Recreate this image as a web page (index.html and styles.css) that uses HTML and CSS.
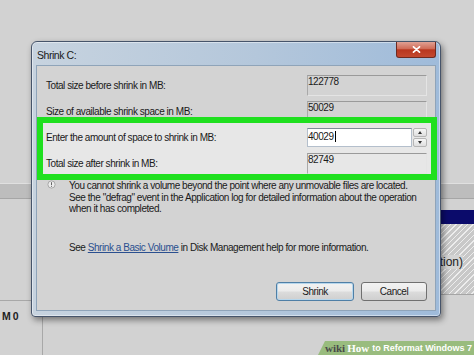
FILE: index.html
```html
<!DOCTYPE html>
<html>
<head>
<meta charset="utf-8">
<title>Shrink C:</title>
<link rel="stylesheet" href="styles.css">
</head>
<body>
<div class="desk">
  <div class="backdrop">
    <div class="band"></div>
    <div class="disk-row">
      <div class="disk-label"></div>
      <div class="partition">
        <div class="part-head"></div>
        <div class="part-body"><span class="part-text">(Primary Partition)</span></div>
      </div>
    </div>
    <div class="cd-row">
      <div class="cd-label">M 0</div>
      <div class="cd-part"></div>
    </div>
  </div>

  <div class="dialog">
    <div class="titlebar">
      <span class="title">Shrink C:</span>
      <span class="close">
        <svg width="9" height="7" viewBox="0 0 9 7"><path d="M1.5 0.8 L7.5 6.2 M7.5 0.8 L1.5 6.2" stroke="#fff" stroke-width="1.7" stroke-linecap="round"/></svg>
      </span>
    </div>
    <div class="client">
      <div class="row"><span>Total size before shrink in MB:</span><span class="field">122778</span></div>
      <div class="row"><span>Size of available shrink space in MB:</span><span class="field">50029</span></div>
      <div class="highlight">
        <div class="row row-in"><span>Enter the amount of space to shrink in MB:</span>
          <span class="spin"><span class="input">40029<span class="caret"></span></span><span class="spin-btns"><span class="sb"><span class="arrow up"></span></span><span class="sb"><span class="arrow down"></span></span></span></span>
        </div>
        <div class="row row-after"><span>Total size after shrink in MB:</span><span class="field">82749</span></div>
      </div>
      <div class="info">
        <svg class="info-icon" width="9" height="9" viewBox="0 0 9 9"><circle cx="4.5" cy="4.5" r="3.6" fill="#ececec" stroke="#9a9a9a" stroke-width="0.8"/><rect x="4" y="2.2" width="1" height="2.8" fill="#666"/><rect x="4" y="5.8" width="1" height="1" fill="#666"/></svg>
        <p>You cannot shrink a volume beyond the point where any unmovable files are located.<br>See the "defrag" event in the Application log for detailed information about the operation<br>when it has completed.</p>
      </div>
      <p class="see">See <a class="link">Shrink a Basic Volume</a> in Disk Management help for more information.</p>
      <div class="buttons">
        <button class="btn btn-default">Shrink</button>
        <button class="btn btn-cancel">Cancel</button>
      </div>
    </div>
  </div>

  <div class="badge"><span class="wiki">wiki</span><span class="how">How</span><span class="rest">to Reformat Windows 7</span></div>
</div>
</body>
</html>
```

FILE: styles.css
```css
* { box-sizing: border-box; margin: 0; padding: 0; }
html, body { width: 474px; height: 355px; overflow: hidden; }
body {
  background: #d2d2d2;
  font-family: "Liberation Sans", Arial, sans-serif;
  font-size: 10px;
  letter-spacing: -0.45px;
  color: #1a1a1a;
}
.desk { position: relative; width: 474px; height: 355px; overflow: hidden; }

/* background Disk Management window */
.backdrop {
  position: absolute; left: -40px; top: 0; right: 0; bottom: 0;
  padding-top: 183px;
  display: flex; flex-direction: column;
}
.band {
  height: 16px;
  background: #bdbdbd;
  border-top: 1px solid #e0e0e0;
  border-bottom: 1px solid #a6a6a6;
}
.disk-row { display: flex; margin-top: 11px; height: 85px; }
.disk-label { width: 83px; }
.partition { flex: 1; display: flex; flex-direction: column; }
.part-head { height: 14px; background: #0b0b6b; }
.part-body {
  flex: 1;
  background: repeating-linear-gradient(135deg, #ededed 0 1px, #c8c8c8 1px 4px);
  border-bottom: 1px solid #a5a5a5;
  display: flex; align-items: center; justify-content: flex-end;
  padding: 5px 11px 0 0;
}
.part-text { background: #d4d4d4; font-size: 12px; letter-spacing: 0; white-space: nowrap; color: #222; }
.cd-row { display: flex; margin-top: 5px; flex: 1; }
.cd-label {
  width: 83px;
  border-top: 1px solid #a8a8a8;
  border-right: 1px solid #a8a8a8;
  font-weight: bold; font-size: 10.5px;
  padding: 9px 0 0 42px;
  white-space: nowrap;
  color: #222;
}
.cd-part { flex: 1; }

/* dialog */
.dialog {
  position: absolute; left: 31px; top: 41px; width: 410px; height: 276px;
  border: 1px solid #46546a;
  border-radius: 6px 6px 4px 4px;
  background: linear-gradient(90deg, #c7d3df 0%, #b4c7db 55%, #9fbbda 100%);
  box-shadow: 2px 3px 6px rgba(0,0,0,.45), inset 0 0 0 1px rgba(255,255,255,.45);
  display: flex; flex-direction: column;
  padding: 0 4px 5px 4px;
}
.titlebar { height: 23px; display: flex; align-items: flex-start; }
.title { padding: 7px 0 0 1px; font-size: 10.5px; color: #1a1a1a; }
.close {
  margin-left: auto; width: 40px; height: 16px;
  border: 1px solid #6e2a20; border-top: none;
  border-radius: 0 0 3px 3px;
  background: linear-gradient(#e0a194 0%, #d06b57 45%, #b9371f 52%, #c3492f 100%);
  display: flex; align-items: center; justify-content: center;
}
.client {
  flex: 1;
  background: #d3d3d3;
  border: 1px solid #8fa4b9;
  padding: 9px 8px 9px 9px;
  display: flex; flex-direction: column;
}
.row { display: flex; justify-content: space-between; align-items: center; height: 21px; white-space: nowrap; }
.row + .row { margin-top: 5px; }
.field {
  width: 120px; height: 21px;
  border-top: 1px solid #9a9a9a;
  border-left: 1px solid #a9a9a9;
  border-right: 1px solid #e4e4e4;
  border-bottom: 1px solid #e4e4e4;
  line-height: 12px;
}
.highlight {
  position: relative;
  margin: -5px -10px 0 -9px;
  border: 6px solid #1fe01f;
  background: #e7e7e7;
  padding: 5px 4px 0 3px;
}
.row-in { height: 19px; }
.row-in + .row-after { margin-top: 6px; }
.spin { display: flex; width: 120px; height: 19px; gap: 1px; }
.input {
  width: 105px; height: 19px;
  background: #fff;
  border: 1px solid #b4bfcc; border-top-color: #7e8b9b;
  padding: 2px 0 0 0;
  line-height: 12px;
  display: flex; align-items: flex-start;
}
.caret { display: inline-block; width: 1px; height: 11px; background: #000; margin-left: 1px; }
.spin-btns { width: 14px; display: flex; flex-direction: column; gap: 1px; }
.sb {
  flex: 1;
  border: 1px solid #b5b5b5; border-radius: 2px;
  background: linear-gradient(#f7f7f7, #dedede);
  display: flex; align-items: center; justify-content: center;
}
.arrow { width: 0; height: 0; border-left: 2.5px solid transparent; border-right: 2.5px solid transparent; }
.arrow.up { border-bottom: 3px solid #333; }
.arrow.down { border-top: 3px solid #333; }

.info { display: flex; align-items: flex-start; }
.info-icon { flex: none; margin: 0 13px 0 1px; }
.info p { line-height: 11.5px; white-space: nowrap; }
.see { margin-top: 27.5px; padding-left: 23px; line-height: 11.5px; white-space: nowrap; }
.link { color: #2a4f8f; text-decoration: underline; }

.buttons { margin-top: auto; display: flex; justify-content: flex-end; gap: 7px; }
.btn {
  height: 19px;
  font: inherit; letter-spacing: inherit; color: #1a1a1a;
  border: 1px solid #707070; border-radius: 3px;
  background: linear-gradient(#f2f2f2 0%, #ebebeb 48%, #dcdcdc 52%, #cfcfcf 100%);
}
.btn-default { width: 78px; border-color: #4f7fa6; box-shadow: inset 0 0 0 1px #b6d6ec; }
.btn-cancel { width: 66px; }

/* wikiHow badge */
.badge {
  position: absolute; right: 0; bottom: 0;
  width: 156px; height: 14px;
  clip-path: polygon(7px 0, 100% 0, 100% 100%, 0 100%);
  background: rgba(148, 186, 118, 0.92);
  padding: 0 0 0 7px;
  display: flex; align-items: center;
  letter-spacing: 0;
  white-space: nowrap;
}
.wiki { font-family: "Liberation Serif", serif; font-weight: bold; font-size: 11px; color: #4a4a4a; }
.how { font-family: "Liberation Serif", serif; font-weight: bold; font-size: 11px; color: #fff; margin-left: 2px; }
.rest { font-family: "Liberation Sans", sans-serif; font-weight: bold; font-size: 9px; color: #fff; margin-left: 3px; }
```
